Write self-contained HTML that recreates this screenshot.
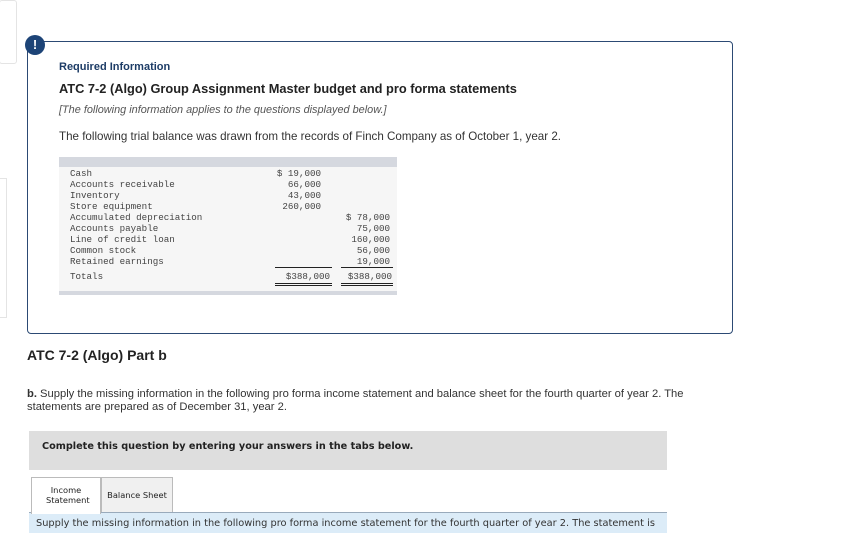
<!DOCTYPE html>
<html><head><style>
body{margin:0;width:864px;height:528px;overflow:hidden;background:#fff;font-family:"Liberation Sans",sans-serif;color:#222;position:relative}
.a{position:absolute}
.card{left:27px;top:41px;width:704px;height:291px;border:1px solid #2c4a74;border-radius:4px}
.ic{left:25px;top:35px;width:20px;height:20px;border-radius:50%;background:#1d4477;color:#fff;font-weight:bold;font-size:13px;text-align:center;line-height:20px}
.mono{font-family:"Liberation Mono",monospace;font-size:9.2px;color:#444;line-height:11px}
.r{text-align:right}
</style></head><body>
<div class="a" style="left:-1px;top:0;width:16px;height:62px;border:1px solid #e4e4e4;border-radius:3px"></div>
<div class="a" style="left:-1px;top:178px;width:6px;height:138px;border:1px solid #e4e4e4"></div>
<div class="a card"></div>
<div class="a ic">!</div>
<div class="a" style="left:59px;top:61px;font-size:11px;font-weight:bold;color:#1d3c66">Required Information</div>
<div class="a" style="left:59px;top:81px;font-size:12.8px;font-weight:bold;color:#222">ATC 7-2 (Algo) Group Assignment Master budget and pro forma statements</div>
<div class="a" style="left:59px;top:104px;font-size:10.9px;font-style:italic;color:#555">[The following information applies to the questions displayed below.]</div>
<div class="a" style="left:59px;top:130px;font-size:11.6px;color:#333">The following trial balance was drawn from the records of Finch Company as of October 1, year 2.</div>
<div class="a" style="left:59px;top:157px;width:338px;height:10px;background:#d5d8df"></div>
<div class="a" style="left:59px;top:167px;width:338px;height:124px;background:#f6f6f6"></div>
<div class="a" style="left:59px;top:291px;width:338px;height:4px;background:#d5d8df"></div>
<div class="a mono" style="left:70px;top:168px">Cash<br>Accounts receivable<br>Inventory<br>Store equipment<br>Accumulated depreciation<br>Accounts payable<br>Line of credit loan<br>Common stock<br>Retained earnings</div>
<div class="a mono r" style="left:272px;top:168px;width:49px">$ 19,000<br>66,000<br>43,000<br>260,000</div>
<div class="a mono r" style="left:340px;top:212px;width:50px">$ 78,000<br>75,000<br>160,000<br>56,000<br>19,000</div>
<div class="a" style="left:275px;top:267px;width:57px;border-top:1px solid #222"></div>
<div class="a" style="left:341px;top:267px;width:52px;border-top:1px solid #222"></div>
<div class="a mono" style="left:70px;top:271px">Totals</div>
<div class="a mono r" style="left:275px;top:271px;width:55px">$388,000</div>
<div class="a mono r" style="left:341px;top:271px;width:51px">$388,000</div>
<div class="a" style="left:275px;top:283px;width:57px;height:1px;border-top:1px solid #222;border-bottom:1px solid #222"></div>
<div class="a" style="left:341px;top:283px;width:52px;height:1px;border-top:1px solid #222;border-bottom:1px solid #222"></div>
<div class="a" style="left:27px;top:347px;font-size:14px;font-weight:bold;color:#222">ATC 7-2 (Algo) Part b</div>
<div class="a" style="left:27px;top:388px;width:710px;font-size:11.2px;line-height:13px;color:#333"><b>b.</b> Supply the missing information in the following pro forma income statement and balance sheet for the fourth quarter of year 2. The statements are prepared as of December 31, year 2.</div>
<div class="a" style="left:29px;top:431px;width:638px;height:39px;background:#dedede"></div>
<div class="a" style="left:42px;top:441px;font-family:'DejaVu Sans',sans-serif;font-size:9.7px;font-weight:bold;color:#222">Complete this question by entering your answers in the tabs below.</div>
<div class="a" style="left:29px;top:512px;width:638px;height:20px;background:#dcecf8;border-top:1px solid #9ab"></div>
<div class="a" style="left:31px;top:477px;border:1px solid #bbb;border-bottom:none;background:#fff;font-family:'DejaVu Sans',sans-serif;font-size:8.3px;text-align:center;line-height:10px;width:40px;padding:7px 14px 0 14px;height:29px">Income Statement</div>
<div class="a" style="left:101px;top:477px;width:70px;height:34px;border:1px solid #bbb;border-bottom:none;background:#f0f0f0;font-family:'DejaVu Sans',sans-serif;font-size:8.3px;text-align:center;line-height:34px">Balance Sheet</div>
<div class="a" style="left:36px;top:518px;font-family:'DejaVu Sans',sans-serif;font-size:9.8px;color:#333;white-space:nowrap">Supply the missing information in the following pro forma income statement for the fourth quarter of year 2. The statement is</div>
</body></html>
